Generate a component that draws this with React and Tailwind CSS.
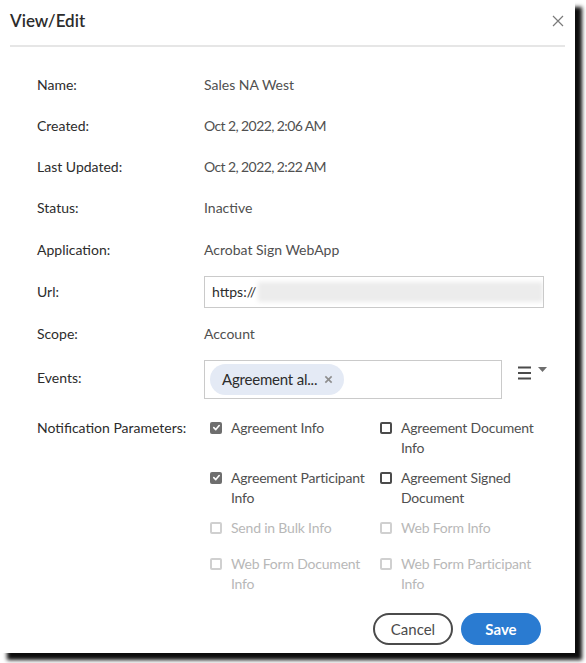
import React from "react";

function Check({ state }) {
  if (state === "checked") {
    return (
      <span className="mt-[4px] flex h-[12px] w-[12px] shrink-0 items-center justify-center rounded-[2px] bg-[#6e6e6e]">
        <svg width="9" height="9" viewBox="0 0 10 10">
          <path d="M2 5.2 L4.2 7.3 L8 2.8" fill="none" stroke="#fff" strokeWidth="1.8" strokeLinecap="round" strokeLinejoin="round" />
        </svg>
      </span>
    );
  }
  if (state === "disabled") {
    return <span className="mt-[4px] block h-[12px] w-[12px] shrink-0 rounded-[2px] border-2 border-[#d0d0d0]" />;
  }
  return <span className="mt-[4px] block h-[12px] w-[12px] shrink-0 rounded-[2px] border-2 border-[#4b4b4b]" />;
}

function Opt({ state, children }) {
  return (
    <div className="flex gap-[9px] pl-[6px]">
      <Check state={state} />
      <span className={`w-[136px] text-[14px] leading-[20px] tracking-[-0.2px] ${state === "disabled" ? "text-[#b8b8b8]" : "text-[#505050]"}`}>
        {children}
      </span>
    </div>
  );
}

function Row({ label, children, h = "h-[41.25px]", vc = "" }) {
  return (
    <div className={`flex items-center ${h}`}>
      <div className="w-[167px] shrink-0 text-[14px] text-[#2c2c2c]">{label}</div>
      <div className={`text-[14px] text-[#505050] ${vc}`}>{children}</div>
    </div>
  );
}

export default function App() {
  return (
    <div className="min-h-[663px] w-[586px] bg-white" style={{ fontFamily: "Lato, 'Liberation Sans', sans-serif" }}>
      <div className="relative h-[653px] w-[575px] bg-white shadow-[7px_7px_4px_rgba(0,0,0,0.95)]">
        <div className="flex h-[45px] items-center justify-between px-[10px] pb-[4px]">
          <div className="text-[17px] font-semibold text-[#2c2c2c]">View/Edit</div>
          <svg width="12" height="12" viewBox="0 0 12 12" className="mr-[1px]">
            <path d="M1 1 L11 11 M11 1 L1 11" stroke="#7a7a7a" strokeWidth="1.2" />
          </svg>
        </div>
        <div className="mx-[10px] h-[2px] bg-[#e6e6e6]" />
        <div className="pl-[37px] pr-[20px] pt-[16.5px]">
          <Row label="Name:">Sales NA West</Row>
          <Row label="Created:" vc="tracking-[-0.6px]">Oct 2, 2022, 2:06 AM</Row>
          <Row label="Last Updated:" vc="tracking-[-0.6px]">Oct 2, 2022, 2:22 AM</Row>
          <Row label="Status:">Inactive</Row>
          <Row label="Application:">Acrobat Sign WebApp</Row>
          <div className="mt-[6px] flex items-center">
            <div className="w-[167px] shrink-0 text-[14px] text-[#2c2c2c]">Url:</div>
            <div className="flex h-[32px] w-[340px] shrink-0 items-center overflow-hidden border border-[#cacaca] pl-[7px] text-[14px] text-[#2c2c2c]">
              <span>https://</span>
              <span className="ml-[2px] h-[20px] flex-1 bg-[#ececec] blur-[2px]" />
            </div>
          </div>
          <Row label="Scope:" h="h-[52px]">Account</Row>
          <div className="flex">
            <div className="w-[167px] shrink-0 pt-[7px] text-[14px] text-[#2c2c2c]">Events:</div>
            <div className="flex h-[39px] w-[298px] shrink-0 items-center border border-[#cacaca] pl-[5px]">
              <div className="flex h-[31px] items-center gap-[7px] rounded-full bg-[#e4eaf5] pl-[12px] pr-[11px] text-[15px] tracking-[-0.2px] text-[#2c2c2c]">
                <span>Agreement al...</span>
                <svg width="9" height="9" viewBox="0 0 10 10">
                  <path d="M1.5 1.5 L8.5 8.5 M8.5 1.5 L1.5 8.5" stroke="#8e8e8e" strokeWidth="1.8" />
                </svg>
              </div>
            </div>
            <div className="ml-[16px] mt-[6px] flex shrink-0 items-start gap-[7px]">
              <svg width="13" height="14" viewBox="0 0 13 14">
                <rect x="0" y="0.5" width="13" height="2" fill="#4b4b4b" />
                <rect x="0" y="6" width="13" height="2" fill="#4b4b4b" />
                <rect x="0" y="11.5" width="13" height="2" fill="#4b4b4b" />
              </svg>
              <svg width="9" height="6" viewBox="0 0 9 6" className="mt-[1px]">
                <path d="M0 0 L9 0 L4.5 5 Z" fill="#6e6e6e" />
              </svg>
            </div>
          </div>
          <div className="mt-[19px] flex">
            <div className="w-[167px] shrink-0 text-[14px] leading-[20px] text-[#2c2c2c]">Notification Parameters:</div>
            <div className="grid grid-cols-[170px_170px]">
              <div className="h-[50px]"><Opt state="checked">Agreement Info</Opt></div>
              <div className="h-[50px]"><Opt state="unchecked">Agreement Document Info</Opt></div>
              <div className="h-[50px]"><Opt state="checked">Agreement Participant Info</Opt></div>
              <div className="h-[50px]"><Opt state="unchecked">Agreement Signed Document</Opt></div>
              <div className="h-[36px]"><Opt state="disabled">Send in Bulk Info</Opt></div>
              <div className="h-[36px]"><Opt state="disabled">Web Form Info</Opt></div>
              <div><Opt state="disabled">Web Form Document Info</Opt></div>
              <div><Opt state="disabled">Web Form Participant Info</Opt></div>
            </div>
          </div>
        </div>
        <div className="absolute bottom-[8px] right-[34px] flex gap-[8px]">
          <button className="flex h-[32px] w-[80px] items-center justify-center rounded-full border-2 border-[#4b4b4b] text-[15px] text-[#4b4b4b]">
            Cancel
          </button>
          <button className="flex h-[32px] w-[80px] items-center justify-center rounded-full bg-[#2a7bd1] text-[15px] font-bold text-white">
            Save
          </button>
        </div>
      </div>
    </div>
  );
}
